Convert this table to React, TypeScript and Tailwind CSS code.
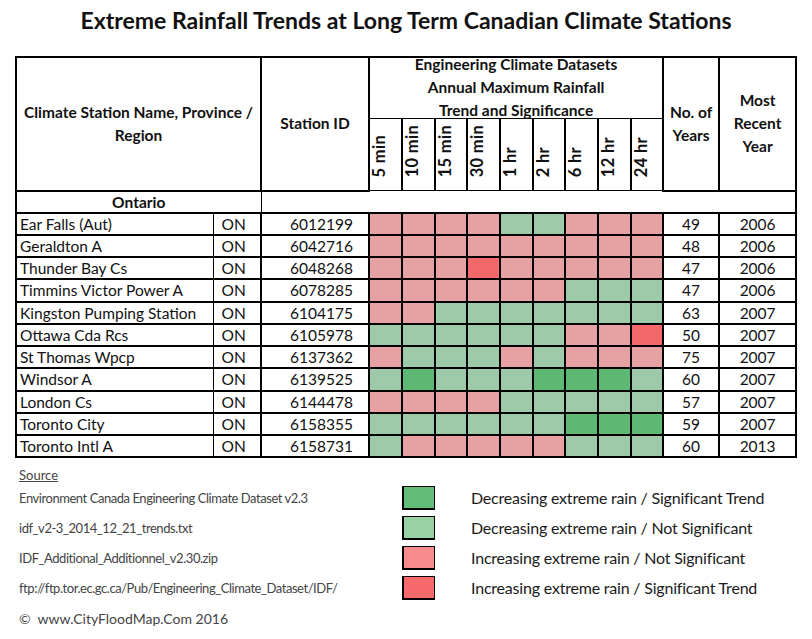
import React from 'react';

type Cell = 'P' | 'G' | 'D' | 'R';

const cellColor: Record<Cell, string> = {
  P: 'bg-[#e6a1a3]',
  G: 'bg-[#9fcaaa]',
  D: 'bg-[#5db874]',
  R: 'bg-[#f4676a]',
};

const durations = ['5 min', '10 min', '15 min', '30 min', '1 hr', '2 hr', '6 hr', '12 hr', '24 hr'];

const stations: { name: string; id: string; trend: string; years: number; recent: number }[] = [
  { name: 'Ear Falls (Aut)', id: '6012199', trend: 'PPPPGGPPP', years: 49, recent: 2006 },
  { name: 'Geraldton A', id: '6042716', trend: 'PPPPPPPPP', years: 48, recent: 2006 },
  { name: 'Thunder Bay Cs', id: '6048268', trend: 'PPPRPPPPP', years: 47, recent: 2006 },
  { name: 'Timmins Victor Power A', id: '6078285', trend: 'PPPPPPGGG', years: 47, recent: 2006 },
  { name: 'Kingston Pumping Station', id: '6104175', trend: 'PPGGGGGGG', years: 63, recent: 2007 },
  { name: 'Ottawa Cda Rcs', id: '6105978', trend: 'GGGGGGPPR', years: 50, recent: 2007 },
  { name: 'St Thomas Wpcp', id: '6137362', trend: 'PGGGPGPPP', years: 75, recent: 2007 },
  { name: 'Windsor A', id: '6139525', trend: 'GDGGGDDDG', years: 60, recent: 2007 },
  { name: 'London Cs', id: '6144478', trend: 'PPPPGGGGG', years: 57, recent: 2007 },
  { name: 'Toronto City', id: '6158355', trend: 'GGGGGGDDD', years: 59, recent: 2007 },
  { name: 'Toronto Intl A', id: '6158731', trend: 'GPPPPPGGG', years: 60, recent: 2013 },
];

const legend = [
  { source: 'Environment Canada Engineering Climate Dataset v2.3', color: 'bg-[#62bd7a]', label: 'Decreasing extreme rain / Significant Trend' },
  { source: 'idf_v2-3_2014_12_21_trends.txt', color: 'bg-[#98d2a4]', label: 'Decreasing extreme rain / Not Significant' },
  { source: 'IDF_Additional_Additionnel_v2.30.zip', color: 'bg-[#f78b8d]', label: 'Increasing extreme rain / Not Significant' },
  { source: 'ftp://ftp.tor.ec.gc.ca/Pub/Engineering_Climate_Dataset/IDF/', color: 'bg-[#f7696b]', label: 'Increasing extreme rain / Significant Trend' },
];

const gridWidths = ['w-[33px]', 'w-[33px]', 'w-[32px]', 'w-[33px]', 'w-[33px]', 'w-[32px]', 'w-[33px]', 'w-[33px]', 'w-[32px]'];

export default function App() {
  return (
    <div className="h-[639px] w-[812px] overflow-hidden bg-white font-['Lato',sans-serif] text-[#111]">
      <h1 className="h-[40px] text-center text-[23px] font-bold leading-[40px]">
        Extreme Rainfall Trends at Long Term Canadian Climate Stations
      </h1>

      <div className="mt-[16px] pl-[15px]">
        <table className="w-[780px] table-fixed border-collapse border-2 border-black text-[15.5px]">
          <colgroup>
            <col className="w-[197px]" />
            <col className="w-[48px]" />
            <col className="w-[108px]" />
            {gridWidths.map((w, i) => (
              <col key={i} className={w} />
            ))}
            <col className="w-[56px]" />
            <col className="w-[77px]" />
          </colgroup>
          <thead className="font-bold">
            <tr>
              <th colSpan={2} rowSpan={2} className="border-2 border-black px-1 text-center align-middle font-bold leading-[23px]">
                Climate Station Name, Province / Region
              </th>
              <th rowSpan={2} className="border-2 border-black text-center align-middle font-bold">
                Station ID
              </th>
              <th colSpan={9} className="border border-black p-0 text-center align-top font-bold leading-[23px]">
                <div className="flex h-[60px] flex-col">
                  <div className="-mt-[5px]">
                    Engineering Climate Datasets
                    <br />
                    Annual Maximum Rainfall
                    <br />
                    Trend and Significance
                  </div>
                </div>
              </th>
              <th rowSpan={2} className="border-2 border-black text-center align-middle font-bold leading-[23px]">
                No. of
                <br />
                Years
              </th>
              <th rowSpan={2} className="border-2 border-black text-center align-middle font-bold leading-[23px]">
                Most
                <br />
                Recent
                <br />
                Year
              </th>
            </tr>
            <tr className="h-[72px]">
              {durations.map((d) => (
                <th key={d} className="border-x-2 border-b border-t border-black p-0 pb-[13px] align-bottom font-bold">
                  <div className="mx-auto rotate-180 whitespace-nowrap text-[16.5px] leading-[18px] tracking-[0.3px] [writing-mode:vertical-rl]">
                    {d}
                  </div>
                </th>
              ))}
            </tr>
          </thead>
          <tbody>
            <tr className="h-[22px]">
              <td colSpan={2} className="border border-black text-center font-bold leading-[20px]">
                Ontario
              </td>
              <td colSpan={12} className="border border-black" />
            </tr>
            {stations.map((s) => (
              <tr key={s.id} className="h-[22.27px] leading-[18px]">
                <td className="whitespace-nowrap border-2 border-r border-black pl-[3px]">{s.name}</td>
                <td className="border-y-2 border-l border-r-2 border-black pl-[8px]">ON</td>
                <td className="border-2 border-black pr-[15px] text-right">{s.id}</td>
                {s.trend.split('').map((c, i) => (
                  <td key={i} className={`border-2 border-black ${cellColor[c as Cell]}`} />
                ))}
                <td className="border-2 border-black text-center">{s.years}</td>
                <td className="border-2 border-black text-center">{s.recent}</td>
              </tr>
            ))}
          </tbody>
        </table>
      </div>

      <div className="pl-[19px]">
        <div className="mt-[9px] h-[16px] text-[13px] leading-[16px] text-[#444] underline">Source</div>
        {legend.map((l) => (
          <div key={l.label} className="grid h-[30px] grid-cols-[383px_69px_1fr] items-center">
            <div className="whitespace-nowrap text-[13px] tracking-[-0.45px] text-[#444]">{l.source}</div>
            <div className={`h-[24px] w-[33px] border-b-2 border-l-2 border-r border-t border-black ${l.color}`} />
            <div className="whitespace-nowrap text-[16px] tracking-[-0.2px] text-[#1a1a1a]">{l.label}</div>
          </div>
        ))}
        <div className="mt-[6px] h-[20px] whitespace-pre text-[14px] leading-[20px] text-[#444]">©  www.CityFloodMap.Com 2016</div>
      </div>
    </div>
  );
}
